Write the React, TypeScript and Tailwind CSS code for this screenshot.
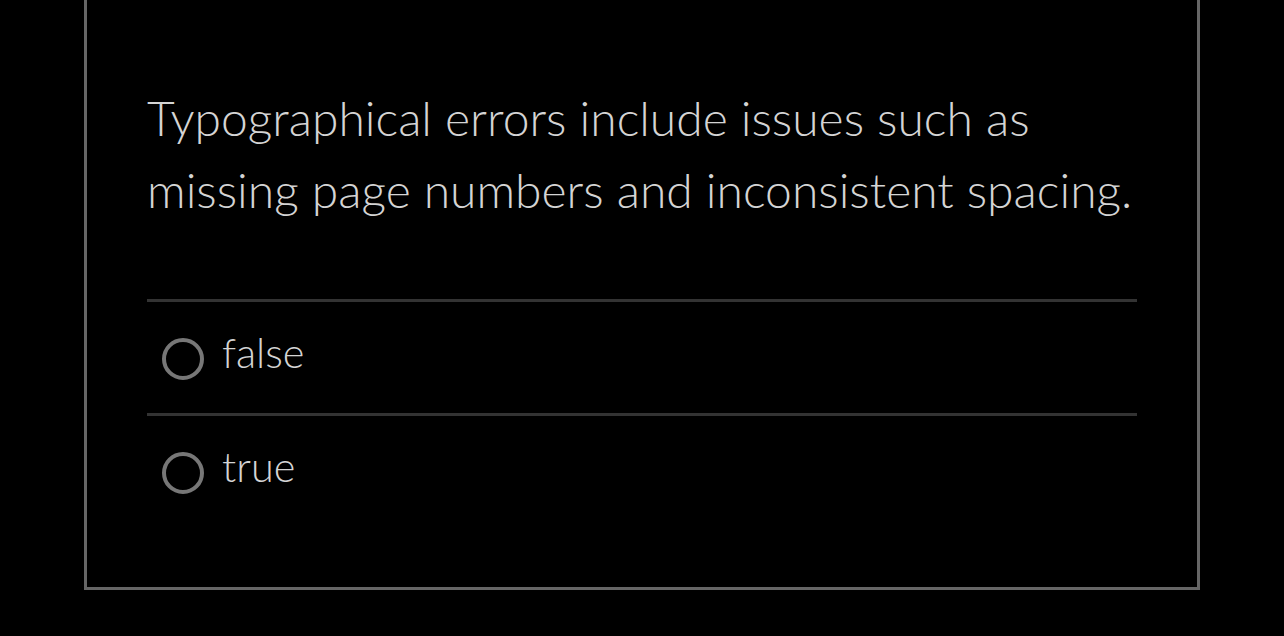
import React from "react";

function Option({ label }: { label: string }) {
  return (
    <div className="flex h-[114px] items-center border-t-[3px] border-[#333333]">
      <div className="ml-[15px] mt-[2px] h-[42px] w-[42px] shrink-0 rounded-full border-[4px] border-[#777777]" />
      <span className="mb-[10px] ml-[18px] text-[41.5px] font-light leading-[49px] text-[#d4d4d4]">
        {label}
      </span>
    </div>
  );
}

export default function App() {
  return (
    <div
      className="h-[636px] w-[1284px] overflow-hidden bg-black"
      style={{ fontFamily: "Lato, 'Open Sans', sans-serif" }}
    >
      <div className="ml-[84px] w-[1116px] border-x-[3px] border-b-[3px] border-[#666666] px-[60px] pb-[60px] pt-[82px]">
        <p className="text-[48px] font-light leading-[72px] text-[#d4d4d4]">
          Typographical errors include issues such as
          <br />
          missing page numbers and inconsistent spacing.
        </p>
        <div className="mt-[73px]">
          <Option label="false" />
          <Option label="true" />
        </div>
      </div>
    </div>
  );
}
